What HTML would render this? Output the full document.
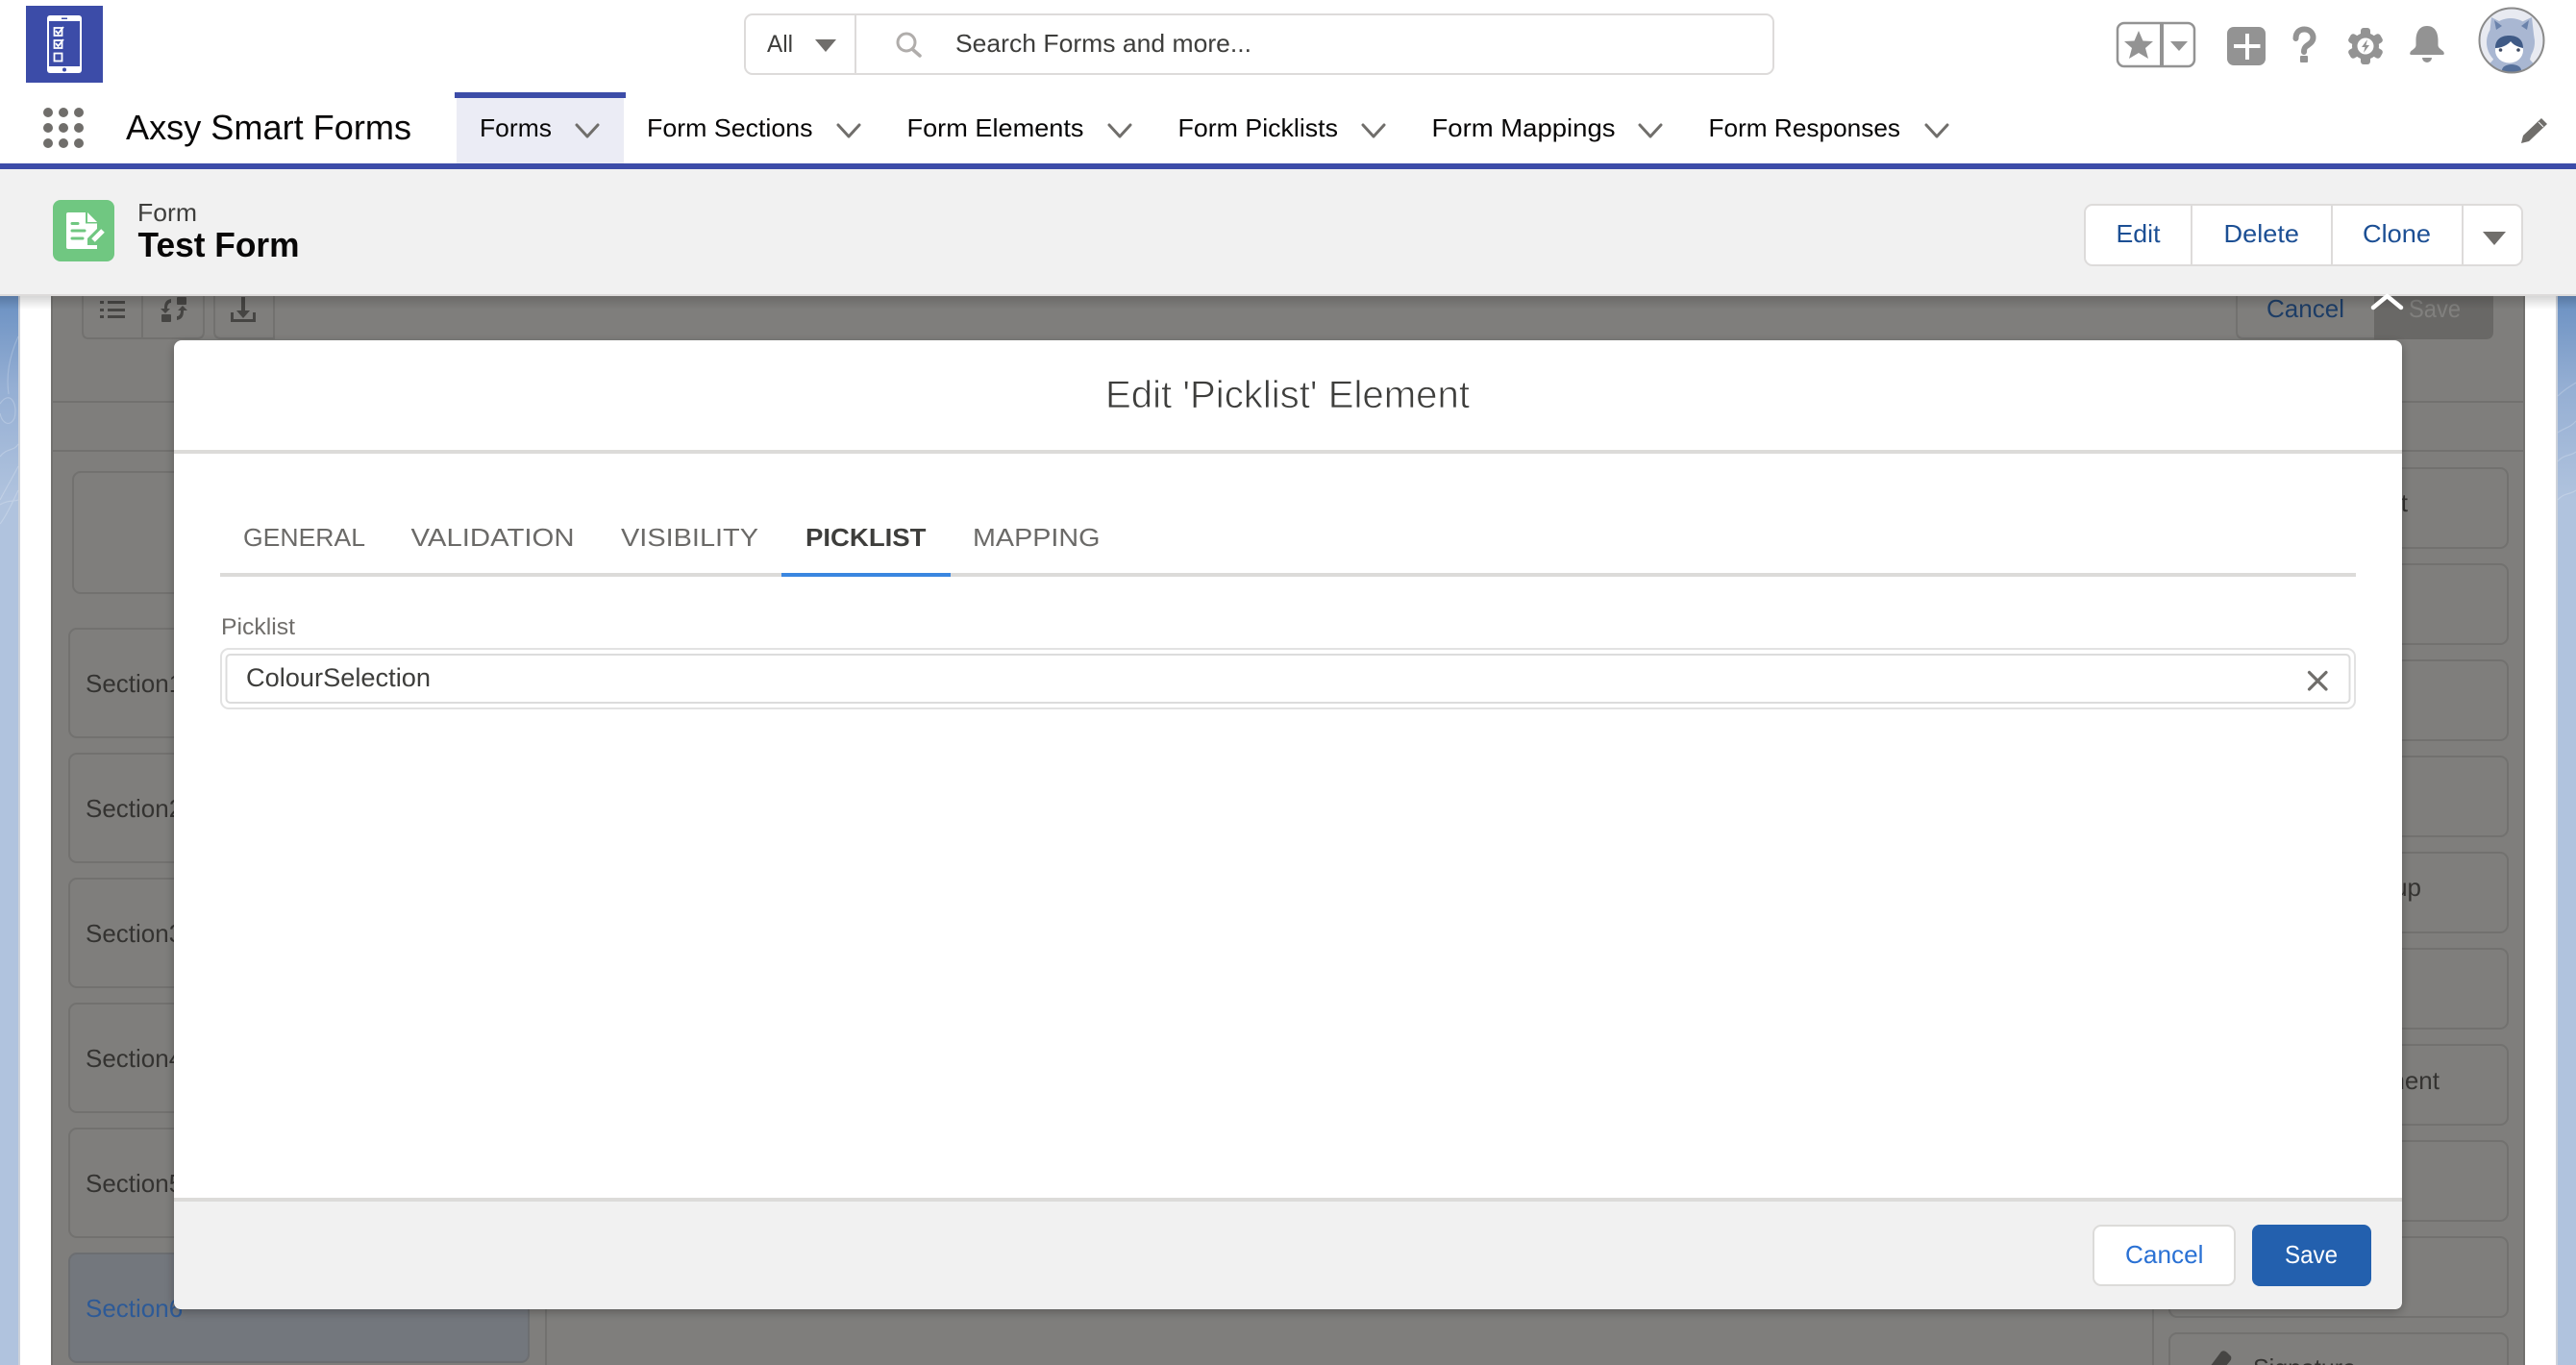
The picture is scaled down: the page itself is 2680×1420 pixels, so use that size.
<!DOCTYPE html>
<html lang="en"><head><meta charset="utf-8"><title>Axsy Smart Forms</title>
<style>
html,body{margin:0;padding:0;background:#fff;width:2680px;height:1420px;overflow:hidden}
svg{display:block}
text{font-family:"Liberation Sans",sans-serif}
</style></head><body>
<svg xmlns="http://www.w3.org/2000/svg" width="2680" height="1420" viewBox="0 0 2680 1420">
<defs>
<linearGradient id="strip" x1="0" y1="0" x2="0" y2="1"><stop offset="0" stop-color="#6a90c2"/><stop offset=".083" stop-color="#94aed3"/><stop offset=".19" stop-color="#b0c3de"/><stop offset="1" stop-color="#b0c3de"/></linearGradient>
<linearGradient id="hs" x1="0" y1="0" x2="0" y2="1"><stop offset="0" stop-color="#000" stop-opacity=".16"/><stop offset="1" stop-color="#000" stop-opacity="0"/></linearGradient>
<filter id="ms" x="-5%" y="-5%" width="110%" height="110%"><feDropShadow dx="0" dy="3" stdDeviation="5" flood-color="#000" flood-opacity=".28"/></filter>
<clipPath id="av"><circle cx="2613" cy="42" r="33"/></clipPath>
</defs>

<!-- page backdrop -->
<rect width="2680" height="1420" fill="#fff"/>
<rect x="0" y="308" width="19" height="1112" fill="url(#strip)"/>
<rect x="2661" y="308" width="19" height="1112" fill="url(#strip)"/>
<rect x="19" y="308" width="2" height="1112" fill="#cdd2da"/>
<rect x="2659" y="308" width="2" height="1112" fill="#cdd2da"/>
<g fill="none" stroke="#fff" stroke-opacity=".22" stroke-width="1.2">
<path d="M19 350C10 370 6 390 9 410M0 420C10 405 19 420 15 435C10 445 2 440 0 430M0 475C8 465 14 470 19 462M0 520C8 505 14 495 19 485M0 545C8 535 14 520 19 510M0 525C8 520 14 522 19 520"/>
<path d="M2661 412C2668 405 2674 402 2680 398M2661 450C2668 445 2674 445 2680 438M2661 480C2668 472 2674 475 2680 470M2661 520C2668 512 2674 515 2680 510"/>
</g>

<!-- dimmed background panel -->
<rect x="53" y="308" width="2574" height="1112" fill="#7f7e7c"/>
<rect x="53" y="308" width="2" height="1112" fill="#72716f"/>
<rect x="2625" y="308" width="2" height="1112" fill="#72716f"/>
<g fill="none" stroke="#72716f" stroke-width="2">
<path d="M55 418H2625M55 469H2625M568 469V1420M2240 469V1420"/>
<path d="M86 308V345Q86 352 92 352H148V308M148 352H205Q212 352 212 345V308M223 308V345Q223 352 230 352H285V308"/>
<path d="M2327 308V345Q2327 352 2334 352H2470"/>
<rect x="76" y="491" width="500" height="126" rx="8"/>
<rect x="72" y="654" width="478" height="113" rx="8"/>
<rect x="72" y="784" width="478" height="113" rx="8"/>
<rect x="72" y="914" width="478" height="113" rx="8"/>
<rect x="72" y="1044" width="478" height="113" rx="8"/>
<rect x="72" y="1174" width="478" height="113" rx="8"/>
<rect x="2257" y="487" width="352" height="83" rx="8"/>
<rect x="2257" y="587" width="352" height="83" rx="8"/>
<rect x="2257" y="687" width="352" height="83" rx="8"/>
<rect x="2257" y="787" width="352" height="83" rx="8"/>
<rect x="2257" y="887" width="352" height="83" rx="8"/>
<rect x="2257" y="987" width="352" height="83" rx="8"/>
<rect x="2257" y="1087" width="352" height="83" rx="8"/>
<rect x="2257" y="1187" width="352" height="83" rx="8"/>
<rect x="2257" y="1287" width="352" height="83" rx="8"/>
<rect x="2257" y="1387" width="352" height="60" rx="8"/>
</g>
<rect x="72" y="1304" width="478" height="113" rx="8" fill="#73777d" stroke="#6c6e71" stroke-width="2"/>
<path d="M2470 308H2594V345Q2594 353 2586 353H2470Z" fill="#696866"/>

<!-- background toolbar icons -->
<g fill="#464543">
<rect x="104" y="313" width="4" height="3"/><rect x="104" y="321" width="4" height="3"/><rect x="104" y="328" width="4" height="3"/>
<rect x="112" y="313" width="18" height="3"/><rect x="112" y="321" width="18" height="3"/><rect x="112" y="328" width="18" height="3"/>
<rect x="184" y="309" width="10" height="8" rx="1"/><rect x="168" y="327" width="10" height="8" rx="1"/>
<path d="M178 311C172 312 171 316 171 321H167L172 326L177 321H174C174 318 175 315 178 315ZM184 333C190 332 191 328 191 323H195L190 318L185 323H188C188 326 187 329 184 329Z"/>
<path d="M251 309h4v14h5l-7 8-7-8h5zM240 325h3v7h20v-7h3v10h-26z"/>
</g>

<!-- background text -->
<g font-size="26" fill="#343331">
<text x="89" y="720">Section1</text>
<text x="89" y="850">Section2</text>
<text x="89" y="980">Section3</text>
<text x="89" y="1110">Section4</text>
<text x="89" y="1240">Section5</text>
<text x="2505" y="532" text-anchor="end">Text</text>
<text x="2519" y="932" text-anchor="end">Lookup</text>
<text x="2538" y="1133" text-anchor="end">Attachment</text>
<text x="2344" y="1432" textLength="107" lengthAdjust="spacingAndGlyphs">Signature</text>
</g>
<text x="89" y="1370" font-size="26" fill="#2d5a97">Section6</text>
<path d="M2311 1406Q2314 1404 2317 1407L2321 1411Q2322 1414 2320 1416L2305 1434H2290Z" fill="#464543"/>
<text x="2358" y="330" font-size="26" fill="#1d3d66" textLength="81" lengthAdjust="spacingAndGlyphs">Cancel</text>
<text x="2506" y="330" font-size="26" fill="#81807e" textLength="54" lengthAdjust="spacingAndGlyphs">Save</text>

<rect x="0" y="308" width="2680" height="14" fill="url(#hs)"/>

<!-- modal -->
<rect x="181" y="354" width="2318" height="1008" rx="8" fill="#fff" filter="url(#ms)"/>
<rect x="181" y="468" width="2318" height="4" fill="#dcdbd9"/>
<text x="1150" y="424" font-size="40" fill="#3e3e3c" stroke="#fff" stroke-width=".8" textLength="379" lengthAdjust="spacingAndGlyphs">Edit 'Picklist' Element</text>

<g font-size="26" fill="#6b6a68">
<text x="253" y="568" textLength="127" lengthAdjust="spacingAndGlyphs">GENERAL</text>
<text x="427.500" y="568" textLength="170" lengthAdjust="spacingAndGlyphs">VALIDATION</text>
<text x="646" y="568" textLength="143" lengthAdjust="spacingAndGlyphs">VISIBILITY</text>
<text x="838" y="568" font-weight="700" fill="#3e3e3c" textLength="125.500" lengthAdjust="spacingAndGlyphs">PICKLIST</text>
<text x="1012" y="568" textLength="132.500" lengthAdjust="spacingAndGlyphs">MAPPING</text>
</g>
<rect x="229" y="596" width="2222" height="4" fill="#dcdbd9"/>
<rect x="813" y="596" width="176" height="4" fill="#3a86e0"/>

<text x="230" y="660" font-size="24" fill="#706e6b" textLength="77" lengthAdjust="spacingAndGlyphs">Picklist</text>
<rect x="230" y="675" width="2220" height="62" rx="8" fill="#fff" stroke="#e2e2e2" stroke-width="2"/>
<rect x="235.500" y="681" width="2209" height="50" rx="4" fill="#fff" stroke="#dcdcdc" stroke-width="2"/>
<text x="256" y="714" font-size="27" fill="#3e3e3c" textLength="192" lengthAdjust="spacingAndGlyphs">ColourSelection</text>
<path d="M2402.500 699.500L2420 717M2420 699.500L2402.500 717" stroke="#706e6b" stroke-width="3.200" stroke-linecap="round" fill="none"/>

<path d="M181 1246H2499V1354Q2499 1362 2491 1362H189Q181 1362 181 1354Z" fill="#f1f1f1"/>
<rect x="181" y="1246" width="2318" height="4" fill="#dcdbd9"/>
<rect x="2178" y="1275" width="147" height="62" rx="8" fill="#fff" stroke="#dcdbd9" stroke-width="2"/>
<text x="2211" y="1314" font-size="26" fill="#2a71d4" textLength="81.500" lengthAdjust="spacingAndGlyphs">Cancel</text>
<rect x="2343" y="1274" width="124" height="64" rx="8" fill="#2360ae"/>
<text x="2377" y="1314" font-size="26" fill="#fff" textLength="55" lengthAdjust="spacingAndGlyphs">Save</text>

<!-- global header -->
<rect x="0" y="0" width="2680" height="170" fill="#fff"/>
<rect x="0" y="170" width="2680" height="6" fill="#3c4ca8"/>
<rect x="27" y="6" width="80" height="80" fill="#3c4ca8"/>
<rect x="49" y="16" width="36" height="60" rx="3" fill="#fff"/>
<rect x="51" y="22" width="32" height="47" fill="#3c4ca8"/>
<rect x="64" y="18.500" width="6" height="1.500" fill="#3c4ca8"/>
<circle cx="67" cy="72.500" r="2" fill="#3c4ca8"/>
<g fill="none" stroke="#fff" stroke-width="1.800">
<rect x="56.500" y="29" width="8" height="8"/><rect x="56.500" y="42" width="8" height="8"/><rect x="56.500" y="55.500" width="8" height="8"/>
<path d="M58 32L60.500 35L66 28M58 45L60.500 48L66 41"/>
</g>

<!-- search -->
<rect x="775" y="15" width="1070" height="62" rx="8" fill="#fff" stroke="#dddbda" stroke-width="2"/>
<rect x="889" y="15" width="2" height="62" fill="#dddbda"/>
<text x="798" y="54" font-size="25" fill="#3e3e3c" textLength="27" lengthAdjust="spacingAndGlyphs">All</text>
<path d="M848 41H870L859 54Z" fill="#706e6b"/>
<circle cx="943" cy="44" r="9" fill="none" stroke="#b0adab" stroke-width="3"/>
<path d="M949 51L957 58" stroke="#b0adab" stroke-width="3.500" stroke-linecap="round"/>
<text x="994" y="54" font-size="26" fill="#3e3e3c" textLength="308" lengthAdjust="spacingAndGlyphs">Search Forms and more...</text>

<!-- right icons -->
<rect x="2203" y="24" width="80" height="45" rx="7" fill="#fff" stroke="#939393" stroke-width="2.500"/>
<rect x="2247" y="24" width="4" height="45" fill="#939393"/>
<path d="M2225 32L2229.500 42.500L2240 43L2232 50L2235 61L2225 55L2215 61L2218 50L2210 43L2220.500 42.500Z" fill="#939393"/>
<path d="M2258 43H2276L2267 53Z" fill="#939393"/>
<rect x="2317" y="28" width="40" height="40" rx="7" fill="#939393"/>
<rect x="2324" y="46" width="27.500" height="4" fill="#fff"/><rect x="2336" y="35" width="4" height="27" fill="#fff"/>
<path d="M2388.500 40C2388.500 33 2393 30.500 2397.500 30.500C2403 30.500 2406.500 34.500 2406.500 39C2406.500 44 2402 46 2399.500 48C2397.500 49.500 2397 51 2397 54" fill="none" stroke="#939393" stroke-width="6" stroke-linecap="round"/>
<rect x="2393" y="58" width="8" height="7" rx="1" fill="#939393"/>
<g fill="#939393" transform="translate(2461 48)">
<circle r="14"/>
<rect x="-5" y="-19" width="10" height="38" rx="3"/>
<rect x="-5" y="-19" width="10" height="38" rx="3" transform="rotate(60)"/>
<rect x="-5" y="-19" width="10" height="38" rx="3" transform="rotate(120)"/>
<circle r="8.500" fill="#fff"/>
<path d="M2 -7L-4 1H-0.500L-2 7L4 -1H0.500Z"/>
</g>
<path d="M2525 27C2516 27 2513.500 35 2513.500 42V47C2513.500 50 2510 51.500 2508 53.500Q2506 57 2509 57H2541Q2544 57 2542 53.500C2540 51.500 2536.500 50 2536.500 47V42C2536.500 35 2534 27 2525 27Z" fill="#939393"/>
<path d="M2520 60H2530A5 5 0 0 1 2520 60Z" fill="#939393"/>
<g clip-path="url(#av)">
<circle cx="2613" cy="42" r="34" fill="#e8eaf1"/>
<path d="M2592 18L2612 28L2634 18L2637 44L2632 62L2645 76H2581L2594 62L2589 44Z" fill="#a9b7d2"/>
<circle cx="2612" cy="44" r="25" fill="#a9b7d2"/>
<path d="M2595 21L2603 27L2597 31Z" fill="#6a82ab"/><path d="M2631 21L2623 27L2629 31Z" fill="#6a82ab"/>
<ellipse cx="2610.500" cy="52.500" rx="14.500" ry="13" fill="#fff"/>
<path d="M2596 50C2596 41 2602 37 2610.500 37C2619 37 2625 41 2625 50C2620 49 2615 47 2612 43C2609 47 2602 50 2596 50Z" fill="#3f5a86"/>
<circle cx="2601.500" cy="52" r="1.800" fill="#3f4b63"/><circle cx="2620" cy="52" r="1.800" fill="#3f4b63"/>
<ellipse cx="2613" cy="73" rx="10" ry="6" fill="#55709b"/>
</g>
<circle cx="2613" cy="42" r="33.500" fill="none" stroke="#8a8a8a" stroke-width="2"/>

<!-- nav -->
<g fill="#706e6b"><circle cx="50" cy="117" r="5"/><circle cx="66" cy="117" r="5"/><circle cx="82" cy="117" r="5"/><circle cx="50" cy="133" r="5"/><circle cx="66" cy="133" r="5"/><circle cx="82" cy="133" r="5"/><circle cx="50" cy="149" r="5"/><circle cx="66" cy="149" r="5"/><circle cx="82" cy="149" r="5"/></g>
<text x="131" y="145" font-size="36" fill="#080707" textLength="297" lengthAdjust="spacingAndGlyphs">Axsy Smart Forms</text>
<rect x="475" y="102" width="174" height="68" fill="#ebecf5"/>
<rect x="473" y="96" width="178" height="6" fill="#3c4ca8"/>
<g font-size="26" fill="#080707">
<text x="499" y="142" textLength="75" lengthAdjust="spacingAndGlyphs">Forms</text>
<text x="673" y="142" textLength="172.500" lengthAdjust="spacingAndGlyphs">Form Sections</text>
<text x="943.500" y="142" textLength="184" lengthAdjust="spacingAndGlyphs">Form Elements</text>
<text x="1225.500" y="142" textLength="166.500" lengthAdjust="spacingAndGlyphs">Form Picklists</text>
<text x="1489.500" y="142" textLength="191" lengthAdjust="spacingAndGlyphs">Form Mappings</text>
<text x="1777.500" y="142" textLength="199.500" lengthAdjust="spacingAndGlyphs">Form Responses</text>
</g>
<g fill="none" stroke="#706e6b" stroke-width="3" stroke-linecap="round" stroke-linejoin="round">
<path d="M600 130L611 142L622 130"/><path d="M872 130L883 142L894 130"/><path d="M1154 130L1165 142L1176 130"/><path d="M1418 130L1429 142L1440 130"/><path d="M1706 130L1717 142L1728 130"/><path d="M2004 130L2015 142L2026 130"/>
</g>
<path d="M2644 123L2650 129L2631 147L2623 149L2625 141Z" fill="#706e6b"/>
<path d="M2641 127L2646 132" stroke="#fff" stroke-width="1"/>

<!-- page header -->
<rect x="0" y="176" width="2680" height="130" fill="#f1f1f1"/>
<rect x="0" y="306" width="2680" height="2" fill="#dddbda"/>
<rect x="55" y="208" width="64" height="64" rx="8" fill="#70c781"/>
<path d="M71 221H89V232.500H101V238L91 248V255H101V259H71Q69 259 69 257V223Q69 221 71 221Z" fill="#fff"/>
<path d="M91 221L101 231H91Z" fill="#fff"/>
<g stroke="#70c781" stroke-width="3" stroke-linecap="round"><path d="M75 232.500H81M75 240H88M75 248H86"/></g>
<path d="M97 250L107 240" stroke="#fff" stroke-width="5"/>
<text x="143" y="230" font-size="26" fill="#3e3e3c" textLength="62" lengthAdjust="spacingAndGlyphs">Form</text>
<text x="143.500" y="267" font-size="36" font-weight="700" fill="#080707" textLength="168" lengthAdjust="spacingAndGlyphs">Test Form</text>
<rect x="2169" y="213" width="455" height="63" rx="8" fill="#fff" stroke="#dddbda" stroke-width="2"/>
<rect x="2279" y="213" width="2" height="63" fill="#dddbda"/><rect x="2425" y="213" width="2" height="63" fill="#dddbda"/><rect x="2561" y="213" width="2" height="63" fill="#dddbda"/>
<g font-size="26" fill="#1c4f94">
<text x="2201.500" y="252" textLength="46" lengthAdjust="spacingAndGlyphs">Edit</text>
<text x="2313.500" y="252" textLength="78.500" lengthAdjust="spacingAndGlyphs">Delete</text>
<text x="2458" y="252" textLength="71" lengthAdjust="spacingAndGlyphs">Clone</text>
</g>
<path d="M2583 241H2607L2595 255Z" fill="#706e6b"/>

<!-- collapse chevron -->
<path d="M2469 320L2483.500 308L2498 320" fill="none" stroke="#fff" stroke-width="4.500" stroke-linecap="round" stroke-linejoin="round"/>
</svg>
</body></html>
